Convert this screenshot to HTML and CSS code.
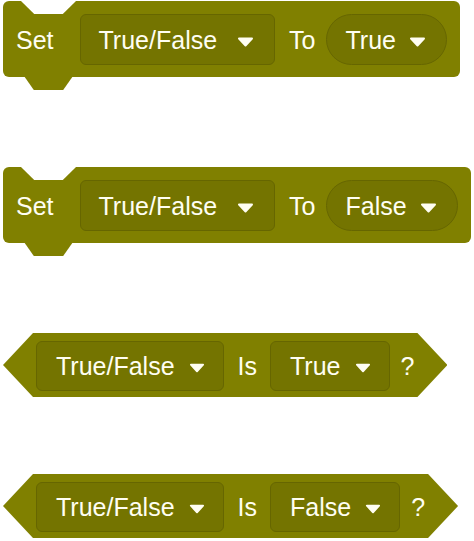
FILE: index.html
```html
<!DOCTYPE html>
<html lang="en">
<head>
    <meta charset="UTF-8">
    <meta name="viewport" content="width=device-width, initial-scale=1.0">
    <title>Logic Blocks</title>
    <link rel="stylesheet" href="styles.css">
</head>
<body>
    <div class="workspace">

        <!-- set block: True -->
        <div class="block stmt">
            <div class="row">
                <span class="label first">Set</span>
                <div class="dropdown box">
                    <span>True/False</span>
                    <svg class="arrow" viewBox="0 0 17 10"><path d="M2 1.5 H15 L8.5 8.5 Z"/></svg>
                </div>
                <span class="label">To</span>
                <div class="dropdown pill">
                    <span>True</span>
                    <svg class="arrow" viewBox="0 0 17 10"><path d="M2 1.5 H15 L8.5 8.5 Z"/></svg>
                </div>
            </div>
        </div>

        <!-- set block: False -->
        <div class="block stmt">
            <div class="row">
                <span class="label first">Set</span>
                <div class="dropdown box">
                    <span>True/False</span>
                    <svg class="arrow" viewBox="0 0 17 10"><path d="M2 1.5 H15 L8.5 8.5 Z"/></svg>
                </div>
                <span class="label">To</span>
                <div class="dropdown pill">
                    <span>False</span>
                    <svg class="arrow" viewBox="0 0 17 10"><path d="M2 1.5 H15 L8.5 8.5 Z"/></svg>
                </div>
            </div>
        </div>

        <!-- is block: True -->
        <div class="block hex">
            <div class="dropdown box">
                <span>True/False</span>
                <svg class="arrow" viewBox="0 0 17 10"><path d="M2 1.5 H15 L8.5 8.5 Z"/></svg>
            </div>
            <span class="label">Is</span>
            <div class="dropdown box">
                <span>True</span>
                <svg class="arrow" viewBox="0 0 17 10"><path d="M2 1.5 H15 L8.5 8.5 Z"/></svg>
            </div>
            <span class="label q">?</span>
        </div>

        <!-- is block: False -->
        <div class="block hex">
            <div class="dropdown box">
                <span>True/False</span>
                <svg class="arrow" viewBox="0 0 17 10"><path d="M2 1.5 H15 L8.5 8.5 Z"/></svg>
            </div>
            <span class="label">Is</span>
            <div class="dropdown box">
                <span>False</span>
                <svg class="arrow" viewBox="0 0 17 10"><path d="M2 1.5 H15 L8.5 8.5 Z"/></svg>
            </div>
            <span class="label q">?</span>
        </div>

    </div>
</body>
</html>
```

FILE: styles.css
```css
body {
    margin: 0;
    background: #fff;
    font-family: "Liberation Sans", Arial, sans-serif;
    font-size: 25px;
    color: #fffef2;
}
.workspace {
    display: flex;
    flex-direction: column;
    align-items: flex-start;
    gap: 77px;
    padding: 1px 0 0 3px;
}
.block {
    position: relative;
}

/* statement block with notch on top and tab below */
.stmt {
    padding-bottom: 13px;
}
.stmt .row {
    display: flex;
    align-items: center;
    height: 76px;
    box-sizing: border-box;
    padding: 13px 13px 12px 13px;
    background: #808000;
    border-radius: 6px;
}
.stmt::before {
    content: "";
    position: absolute;
    top: 0;
    left: 18px;
    width: 55px;
    height: 13px;
    background: #fff;
    clip-path: polygon(0 0, 100% 0, 76% 100%, 24% 100%);
}
.stmt::after {
    content: "";
    position: absolute;
    bottom: 0;
    left: 21px;
    width: 49px;
    height: 14px;
    background: #808000;
    clip-path: polygon(0 0, 100% 0, 80% 100%, 20% 100%);
}

/* boolean block, hexagon shaped */
.hex {
    display: flex;
    align-items: center;
    height: 64px;
    box-sizing: border-box;
    padding: 8px 33px 6px 33px;
    background: #808000;
    clip-path: polygon(0 50%, 30px 0, calc(100% - 30px) 0, 100% 50%, calc(100% - 30px) 100%, 30px 100%);
}

.label {
    margin: 1px 13px 0 14px;
    white-space: nowrap;
}
.label.first {
    margin: 1px 26px 0 0;
}
.label.q {
    margin: 1px 0 0 11px;
}

.dropdown {
    display: flex;
    align-items: center;
    box-sizing: border-box;
    height: 51px;
    padding-top: 1px;
    background: #747400;
    border: 1px solid #666600;
    white-space: nowrap;
}
.arrow {
    width: 17px;
    height: 10px;
    margin-top: 3px;
    fill: #fffef2;
    stroke: #fffef2;
    stroke-width: 2;
    stroke-linejoin: round;
}
.stmt .box {
    padding: 1px 20px 0 18px;
    border-radius: 6px;
}
.stmt .box .arrow {
    margin-left: 20px;
}
.pill {
    padding: 1px 20px 0 19px;
    border-radius: 26px;
    margin-left: -3px;
}
.pill .arrow {
    margin-left: 13px;
}
.hex .box {
    height: 50px;
    padding: 1px 18px 0 19px;
    border-radius: 6px;
}
.hex .box .arrow {
    margin-left: 14px;
    width: 16px;
}
```
